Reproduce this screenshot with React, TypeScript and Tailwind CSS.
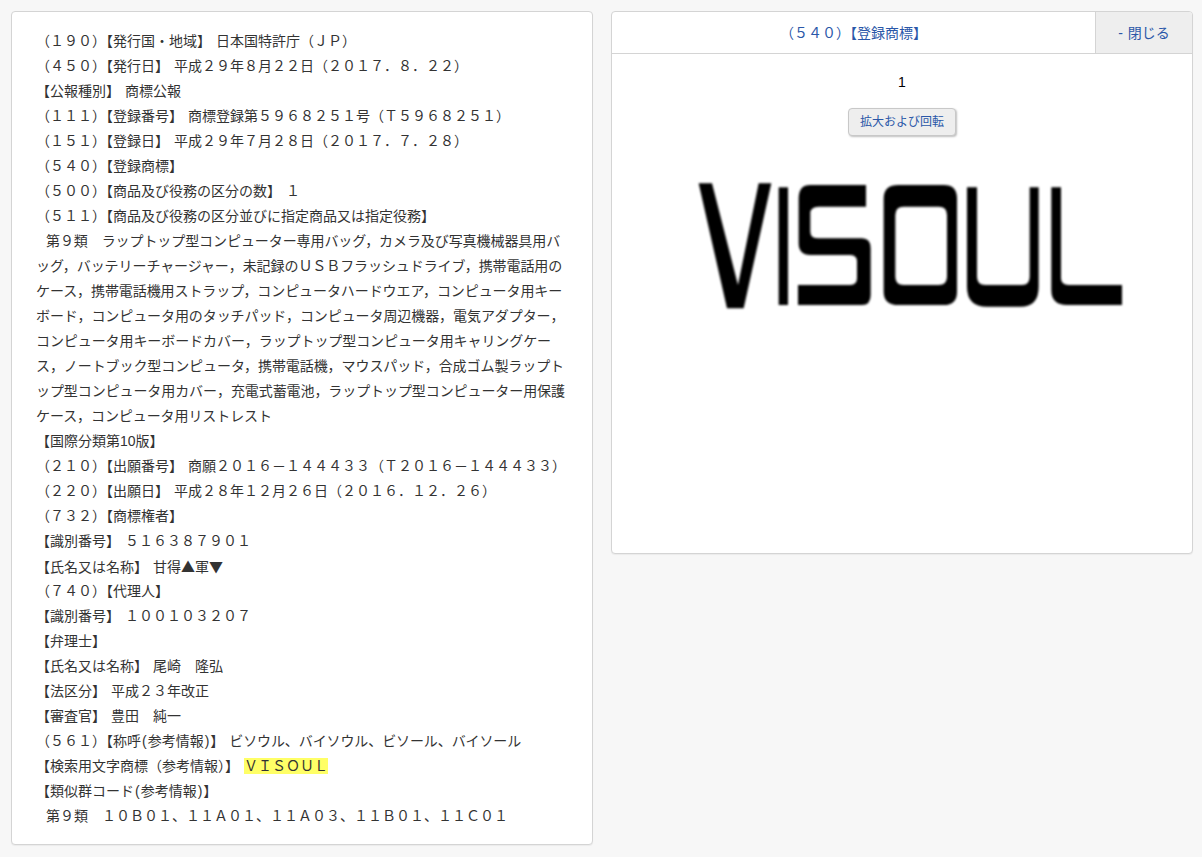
const before = [
  "（１９０）【発行国・地域】 日本国特許庁（ＪＰ）",
  "（４５０）【発行日】 平成２９年８月２２日（２０１７．８．２２）",
  "【公報種別】 商標公報",
  "（１１１）【登録番号】 商標登録第５９６８２５１号（Ｔ５９６８２５１）",
  "（１５１）【登録日】 平成２９年７月２８日（２０１７．７．２８）",
  "（５４０）【登録商標】",
  "（５００）【商品及び役務の区分の数】 １",
  "（５１１）【商品及び役務の区分並びに指定商品又は指定役務】",
];

const goods = [
  "ッグ，バッテリーチャージャー，未記録のＵＳＢフラッシュドライブ，携帯電話用の",
  "ケース，携帯電話機用ストラップ，コンピュータハードウエア，コンピュータ用キー",
  "ボード，コンピュータ用のタッチパッド，コンピュータ周辺機器，電気アダプター，",
  "コンピュータ用キーボードカバー，ラップトップ型コンピュータ用キャリングケー",
  "ス，ノートブック型コンピュータ，携帯電話機，マウスパッド，合成ゴム製ラップト",
  "ップ型コンピュータ用カバー，充電式蓄電池，ラップトップ型コンピューター用保護",
  "ケース，コンピュータ用リストレスト",
];

const applicant = [
  "【国際分類第10版】",
  "（２１０）【出願番号】 商願２０１６－１４４４３３（Ｔ２０１６－１４４４３３）",
  "（２２０）【出願日】 平成２８年１２月２６日（２０１６．１２．２６）",
  "（７３２）【商標権者】",
  "【識別番号】 ５１６３８７９０１",
];

const agent = [
  "（７４０）【代理人】",
  "【識別番号】 １００１０３２０７",
  "【弁理士】",
  "【氏名又は名称】 尾崎　隆弘",
  "【法区分】 平成２３年改正",
  "【審査官】 豊田　純一",
];

const row = "h-[25px] whitespace-nowrap leading-[25px]";

function VisoulLogo() {
  return (
    <svg viewBox="0 0 1440 540" className="block h-[180px] w-[480px] blur-[1px]">
      <path d="M110 100H150L228 405L290 100H328L245 475H195Z" fill="#000" />
      <rect x="350" y="112" width="28" height="353" fill="#000" />
      <path
        d="M445 105H612V170H470Q445 170 445 190V245Q445 265 470 265H600Q626 265 626 295V435Q626 465 600 465H408V405H565Q585 405 585 385V335Q585 315 565 315H445Q410 315 410 280V145Q410 105 445 105Z"
        fill="#000"
      />
      <path
        fillRule="evenodd"
        d="M710 105H845Q885 105 885 145V425Q885 465 845 465H710Q665 465 665 425V145Q665 105 710 105ZM725 170Q700 170 700 195V380Q700 405 725 405H830Q855 405 855 380V195Q855 170 830 170Z"
        fill="#000"
      />
      <path
        d="M915 112H945V380Q945 405 970 405H1080Q1103 405 1103 380V112H1130V410Q1130 470 1075 470H975Q915 470 915 410Z"
        fill="#000"
      />
      <path d="M1168 112H1197V385Q1197 405 1220 405H1380V465H1215Q1168 465 1168 420Z" fill="#000" />
    </svg>
  );
}

export default function App() {
  return (
    <div className="flex min-h-screen items-start gap-[18px] bg-[#f7f7f7] pl-[11px] pt-[11px] font-['Liberation_Sans','Noto_Sans_CJK_JP',sans-serif] text-sm text-[#333] [word-spacing:1px]">
      <div className="h-[834px] w-[582px] rounded border border-[#d4d4d4] bg-white pl-6 pr-6 pt-[17px] shadow-[0_1px_1px_rgba(0,0,0,0.05)]">
        {before.map((line, i) => (
          <div key={i} className={row}>
            {line}
          </div>
        ))}
        <div className={`${row} pl-[10px] tracking-[-0.08px]`}>
          第９類　ラップトップ型コンピューター専用バッグ，カメラ及び写真機械器具用バ
        </div>
        {goods.map((line, i) => (
          <div key={i} className={`${row} tracking-[-0.08px]`}>
            {line}
          </div>
        ))}
        {applicant.map((line, i) => (
          <div key={i} className={row}>
            {line}
          </div>
        ))}
        <div className={row}>
          【氏名又は名称】 甘得<span className="font-['Noto_Sans_CJK_JP']">▲</span>軍
          <span className="font-['Noto_Sans_CJK_JP']">▼</span>
        </div>
        {agent.map((line, i) => (
          <div key={i} className={row}>
            {line}
          </div>
        ))}
        <div className={row}>
          （５６１）【称呼<span className="px-px">(</span>参考情報<span className="px-px">)</span>】{" "}
          <span className="tracking-[-0.1px]">ビソウル、バイソウル、ビソール、バイソール</span>
        </div>
        <div className={row}>
          【検索用文字商標（参考情報）】 <span className="bg-[#ffff66]">ＶＩＳＯＵＬ</span>
        </div>
        <div className={row}>
          【類似群コード<span className="px-px">(</span>参考情報<span className="px-px">)</span>】
        </div>
        <div className={`${row} pl-[10px]`}>第９類　１０Ｂ０１、１１Ａ０１、１１Ａ０３、１１Ｂ０１、１１Ｃ０１</div>
      </div>

      <div className="h-[543px] w-[582px] overflow-hidden rounded border border-[#d4d4d4] bg-white shadow-[0_1px_1px_rgba(0,0,0,0.05)]">
        <div className="flex h-[42px] border-b border-[#d4d4d4] text-[#2a57a8]">
          <div className="flex flex-1 items-center justify-center">（５４０）【登録商標】</div>
          <div className="flex w-[97px] items-center justify-center border-l border-[#d4d4d4] bg-[#eeeeee]">
            - 閉じる
          </div>
        </div>
        <div className="flex flex-col items-center">
          <div className="mt-[18px] h-5 leading-5 text-black">1</div>
          <button
            type="button"
            className="mt-4 h-7 w-[108px] rounded border border-[#c8c8c8] bg-[#eeeeee] text-xs text-[#2a57a8] shadow-[1px_1px_2px_rgba(0,0,0,0.25)]"
          >
            拡大および回転
          </button>
          <div className="mt-[14px]">
            <VisoulLogo />
          </div>
        </div>
      </div>
    </div>
  );
}
